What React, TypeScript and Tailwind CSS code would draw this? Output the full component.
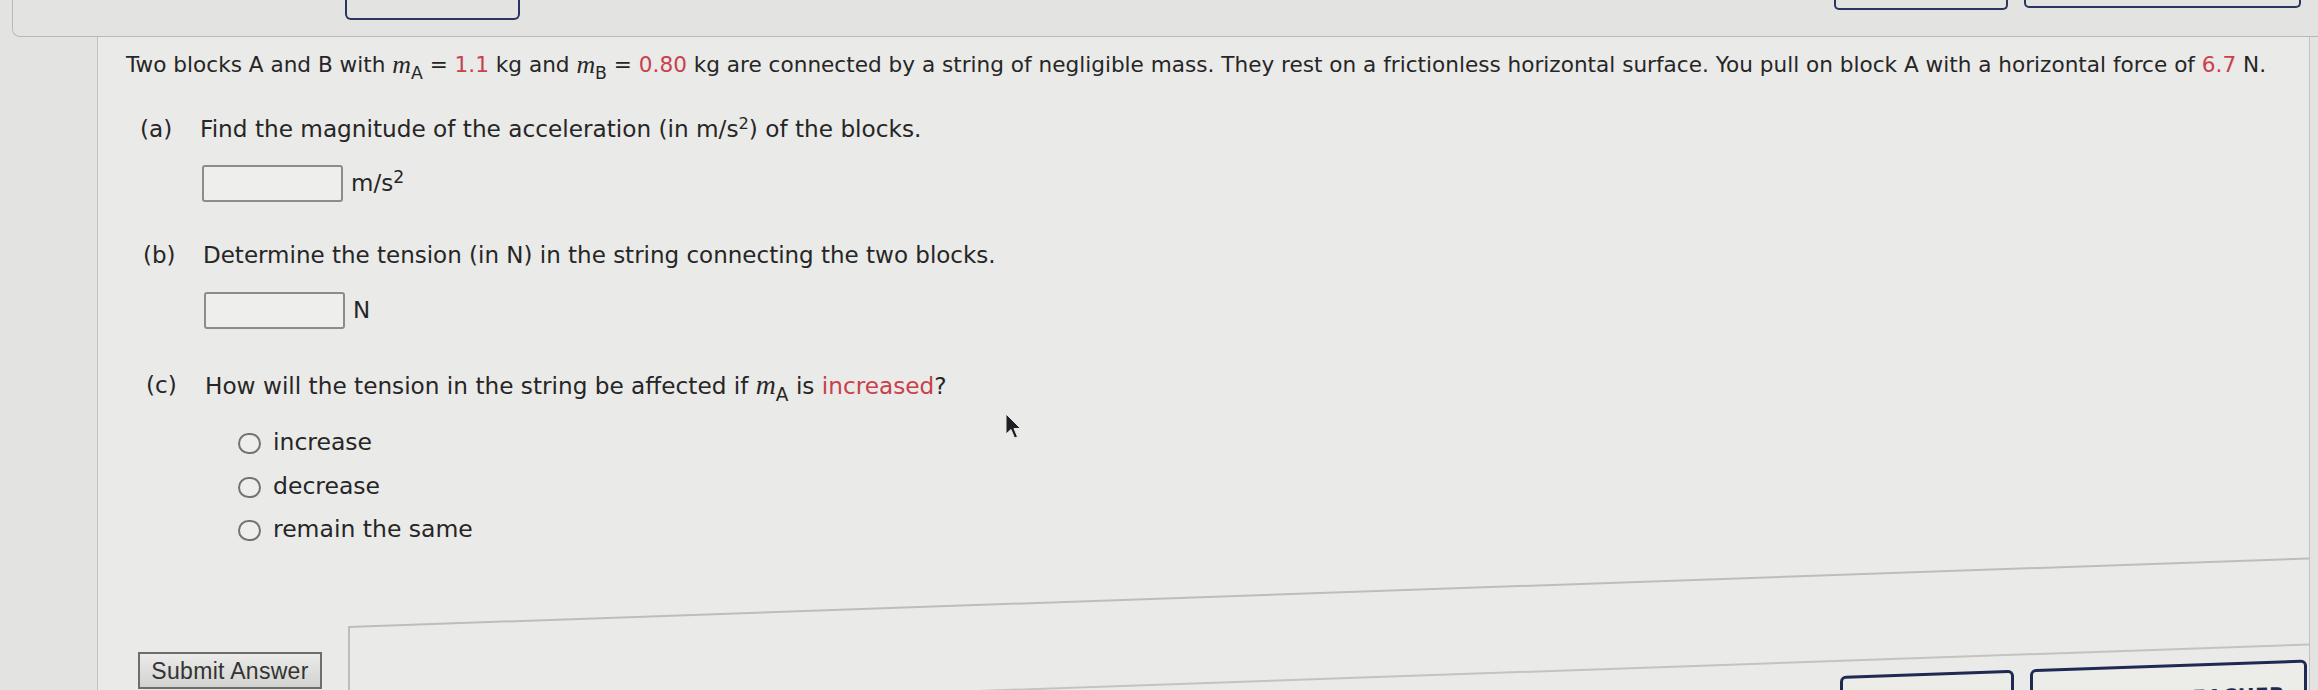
import React from 'react';

const red = 'text-[#c8414b]';

function MassSymbol({ sub }: { sub: string }) {
  return (
    <span className="whitespace-nowrap">
      <span className="font-['Liberation_Serif',serif] italic text-[1.2em]">m</span>
      <span className="relative top-[0.35em] text-[0.8em]">{sub}</span>
    </span>
  );
}

function AnswerBox({ unit }: { unit: React.ReactNode }) {
  return (
    <div className="flex items-center">
      <div className="w-[141px] h-[37px] border-2 border-[#8c8c8a] rounded-[3px] bg-[#eeeeec]" />
      <span className="ml-[8px] text-[23px]">{unit}</span>
    </div>
  );
}

function Radio({ label, className }: { label: string; className?: string }) {
  return (
    <label className={`flex items-center h-[32px] ml-[112px] text-[23.5px] ${className ?? ''}`}>
      <span className="w-[23px] h-[21px] rounded-full border-2 border-[#737371] bg-[#eeeeec]" />
      <span className="ml-[12px]">{label}</span>
    </label>
  );
}

function NavyButton({ width, label }: { width: string; label?: string }) {
  return (
    <div
      className={`${width} h-[60px] border-[3px] border-[#1f2a52] rounded-[6px] bg-[#ecece9] flex justify-center pt-[16px] font-['DejaVu_Sans',sans-serif] font-bold text-[20px] text-[#1f2a52] tracking-wide`}
    >
      {label}
    </div>
  );
}

export default function App() {
  return (
    <div className="relative w-[2318px] h-[690px] overflow-hidden bg-[#e3e3e1] text-[#262626] font-['DejaVu_Sans',sans-serif]">
      {/* top toolbar band */}
      <div className="h-[37px] ml-[12px] border-b border-l border-[#b9b9b7] rounded-bl-[8px] flex items-start">
        <div className="ml-[332px] w-[175px] h-[20px] border-2 border-t-0 border-[#2a3560] rounded-b-[6px]" />
        <div className="ml-auto w-[174px] h-[10px] border-2 border-t-0 border-[#2a3560] rounded-b-[5px]" />
        <div className="ml-[16px] mr-[17px] w-[277px] h-[8px] border-2 border-t-0 border-[#2a3560] rounded-b-[5px]" />
      </div>

      {/* question panel */}
      <div className="ml-[97px] mr-[8px] h-[653px] border-l border-r border-[#c2c2c0] bg-[#eaeae8] pl-[28px] pt-[12px] flex flex-col">
        <p className="h-[32px] flex items-center text-[21.6px] whitespace-nowrap">
          Two blocks A and B with&nbsp;<MassSymbol sub="A" />&nbsp;=&nbsp;<span className={red}>1.1</span>&nbsp;kg and&nbsp;
          <MassSymbol sub="B" />&nbsp;=&nbsp;<span className={red}>0.80</span>&nbsp;kg are connected by a string of negligible
          mass. They rest on a frictionless horizontal surface. You pull on block A with a horizontal force of&nbsp;
          <span className={red}>6.7</span>&nbsp;N.
        </p>

        {/* (a) */}
        <div className="mt-[32px] h-[32px] flex items-center text-[23.2px] whitespace-nowrap">
          <span className="ml-[14px] w-[60px]">(a)</span>
          <span>
            Find the magnitude of the acceleration (in m/s<sup className="text-[0.7em]">2</sup>) of the blocks.
          </span>
        </div>
        <div className="mt-[20px] ml-[76px]">
          <AnswerBox
            unit={
              <>
                m/s<sup className="text-[0.75em]">2</sup>
              </>
            }
          />
        </div>

        {/* (b) */}
        <div className="mt-[37px] h-[32px] flex items-center text-[23px] whitespace-nowrap">
          <span className="ml-[17px] w-[60px]">(b)</span>
          <span>Determine the tension (in N) in the string connecting the two blocks.</span>
        </div>
        <div className="mt-[21px] ml-[78px]">
          <AnswerBox unit="N" />
        </div>

        {/* (c) */}
        <div className="mt-[40px] h-[32px] flex items-center text-[23.2px] whitespace-nowrap">
          <span className="ml-[20px] w-[59px]">(c)</span>
          <span>
            How will the tension in the string be affected if <MassSymbol sub="A" /> is{' '}
            <span className={red}>increased</span>?
          </span>
        </div>
        <div className="mt-[26px] flex flex-col">
          <Radio label="increase" />
          <Radio label="decrease" className="mt-[12px]" />
          <Radio label="remain the same" className="mt-[11px]" />
        </div>

        {/* submit + feedback box */}
        <div className="mt-[56px] flex items-start flex-1">
          <button className="mt-[50px] ml-[12px] w-[184px] h-[37px] border-2 border-[#6d6d6b] bg-gradient-to-b from-[#ebebea] to-[#d2d2d0] font-['Liberation_Sans',sans-serif] text-[23px] tracking-[0.3px] text-[#333]">
            Submit Answer
          </button>
          <div className="mt-[24px] ml-[26px] flex-1 h-[240px] border-t-2 border-l-2 border-[#bdbdbb] origin-top-left -skew-y-2">
            <div className="h-[86px] border-b-2 border-[#c3c3c1]" />
            <div className="mt-[14px] flex justify-end gap-[16px] pr-[2px]">
              <NavyButton width="w-[174px]" />
              <NavyButton width="w-[277px]" label="ASK YOUR TEACHER" />
            </div>
          </div>
        </div>
      </div>

      {/* mouse pointer over the page */}
      <svg className="absolute left-[1005px] top-[413px]" width="18" height="27" viewBox="0 0 18 27">
        <path d="M1 1 L1 21 L6 16.5 L9.5 25 L12.5 23.8 L9 15.5 L15.5 15.5 Z" fill="#202024" stroke="#e8e8e8" strokeWidth="1" />
      </svg>
    </div>
  );
}
